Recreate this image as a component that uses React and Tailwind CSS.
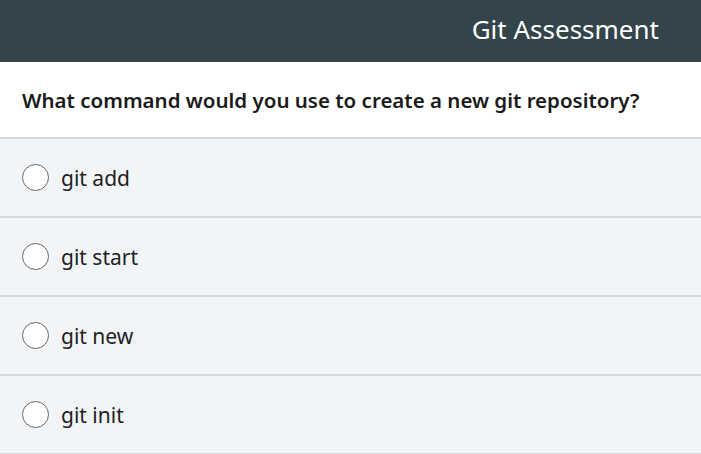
import React, { useState } from "react";

const options = ["git add", "git start", "git new", "git init"];

export default function App() {
  const [selected, setSelected] = useState(null);

  return (
    <div className="w-[701px] min-h-[454px] bg-white font-['Noto_Sans',sans-serif]">
      <header className="h-[62px] bg-[#33444a] flex items-center justify-end pr-[42px] pb-[5px]">
        <h1 className="text-white text-[26px] leading-none">Git Assessment</h1>
      </header>
      <div className="h-[77px] flex items-center px-[22px] pt-[2px] border-b-2 border-[#dadada]">
        <p className="text-[20.5px] font-semibold text-[#1a1a1a]">
          What command would you use to create a new git repository?
        </p>
      </div>
      <ul>
        {options.map((opt, i) => (
          <li
            key={opt}
            onClick={() => setSelected(i)}
            className="h-[79px] flex items-center gap-[12px] px-[22px] bg-[#f2f5f8] border-b-2 border-[#d8d8d8] cursor-pointer"
          >
            <span className="w-[27px] h-[27px] rounded-full border-[1.5px] border-[#666] bg-white flex items-center justify-center">
              {selected === i && <span className="w-[13px] h-[13px] rounded-full bg-[#33444a]" />}
            </span>
            <span className="text-[21px] text-[#222] pt-[2px]">{opt}</span>
          </li>
        ))}
      </ul>
    </div>
  );
}
